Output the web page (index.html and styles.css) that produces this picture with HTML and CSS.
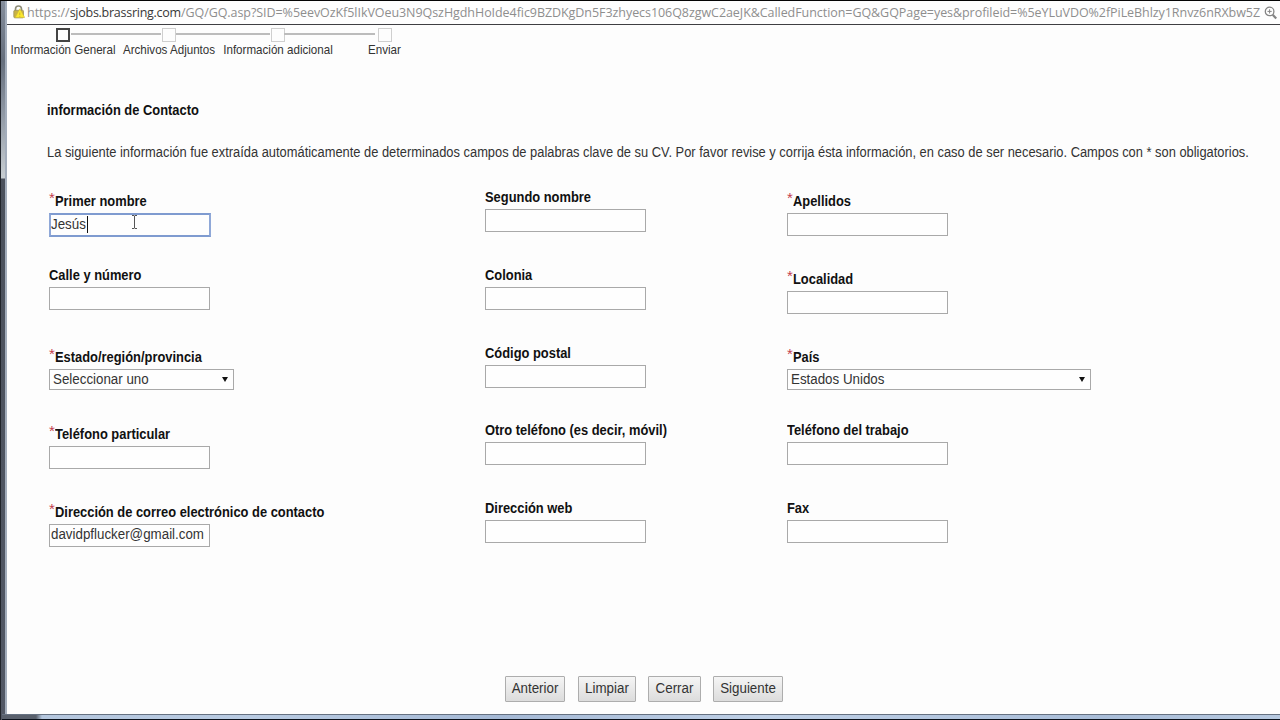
FILE: index.html
```html
<!DOCTYPE html>
<html lang="es">
<head>
<meta charset="utf-8">
<title>Información de Contacto</title>
<link rel="stylesheet" href="styles.css">
</head>
<body>
<div class="window">
  <header class="address">
    <svg class="lock" width="12" height="14" viewBox="0 0 12 14"><path d="M2.5 6V4a3 3 0 0 1 6 0v2" fill="none" stroke="#8d8c78" stroke-width="1.6"/><rect x=".8" y="5.3" width="9.7" height="7.5" rx="1" fill="#c9b343" stroke="#9b9262" stroke-width=".8"/><path d="M6.8 3.8 11.8 12.6H2.2Z" fill="#fae72d" stroke="#c8b53a" stroke-width=".5"/><path d="M6.8 7.5v2.7M6.8 11v.8" stroke="#b89d31" stroke-width=".7"/></svg>
    <div class="url"><span class="scheme">https://</span><span class="host">sjobs.brassring.com</span><span class="path">/GQ/GQ.asp?SID=%5eevOzKf5lIkVOeu3N9QszHgdhHoIde4fic9BZDKgDn5F3zhyecs106Q8zgwC2aeJK&amp;CalledFunction=GQ&amp;GQPage=yes&amp;profileid=%5eYLuVDO%2fPiLeBhlzy1Rnvz6nRXbw5Z</span></div>
    <svg class="zoom" width="14" height="14" viewBox="0 0 14 14" fill="none" stroke="#858585"><circle cx="5.6" cy="5.4" r="4.3" stroke-width="1.3"/><path d="M8.7 8.7 12.2 12.4" stroke-width="2.2"/><path d="M3.5 5.4h4.2M5.6 3.3v4.2" stroke-width="1"/></svg>
  </header>
  <nav class="steps">
    <div class="step s1 current"><i class="box"></i><span>Información General</span></div>
    <div class="step s2"><i class="box"></i><span>Archivos Adjuntos</span></div>
    <div class="step s3"><i class="box"></i><span>Información adicional</span></div>
    <div class="step s4"><i class="box"></i><span>Enviar</span></div>
  </nav>
  <main class="content">
    <h1 class="title">información de Contacto</h1>
    <p class="intro">La siguiente información fue extraída automáticamente de determinados campos de palabras clave de su CV. Por favor revise y corrija ésta información, en caso de ser necesario. Campos con * son obligatorios.</p>
    <form class="form">
      <div class="field req"><label><b class="star">*</b><span>Primer nombre</span></label><div class="input focus"><span class="value">Jesús</span><i class="caret"></i><svg class="beam" width="7" height="14" viewBox="0 0 7 14"><path d="M1 .5h2l.5.5.5-.5h2M3.5 1v12M1 13.5h2l.5-.5.5.5h2" fill="none" stroke="#555"/></svg></div></div>
      <div class="field"><label><span>Segundo nombre</span></label><div class="input"></div></div>
      <div class="field req"><label><b class="star">*</b><span>Apellidos</span></label><div class="input"></div></div>
      <div class="field"><label><span>Calle y número</span></label><div class="input"></div></div>
      <div class="field"><label><span>Colonia</span></label><div class="input"></div></div>
      <div class="field req"><label><b class="star">*</b><span>Localidad</span></label><div class="input"></div></div>
      <div class="field req"><label><b class="star">*</b><span>Estado/región/provincia</span></label><div class="select state"><span class="value">Seleccionar uno</span><i class="arrow"></i></div></div>
      <div class="field"><label><span>Código postal</span></label><div class="input"></div></div>
      <div class="field req"><label><b class="star">*</b><span>País</span></label><div class="select country"><span class="value">Estados Unidos</span><i class="arrow"></i></div></div>
      <div class="field req"><label><b class="star">*</b><span>Teléfono particular</span></label><div class="input"></div></div>
      <div class="field"><label><span>Otro teléfono (es decir, móvil)</span></label><div class="input"></div></div>
      <div class="field"><label><span>Teléfono del trabajo</span></label><div class="input"></div></div>
      <div class="field req"><label><b class="star">*</b><span>Dirección de correo electrónico de contacto</span></label><div class="input"><span class="value">davidpflucker@gmail.com</span></div></div>
      <div class="field"><label><span>Dirección web</span></label><div class="input"></div></div>
      <div class="field"><label><span>Fax</span></label><div class="input"></div></div>
    </form>
    <div class="actions">
      <button class="btn b1" type="button"><span class="value">Anterior</span></button>
      <button class="btn b2" type="button"><span class="value">Limpiar</span></button>
      <button class="btn b3" type="button"><span class="value">Cerrar</span></button>
      <button class="btn b4" type="button"><span class="value">Siguiente</span></button>
    </div>
  </main>
  <footer class="frame-bottom"></footer>
</div>
</body>
</html>
```
FILE: styles.css
```css
* { box-sizing: border-box; }
body { margin: 0; width: 1280px; height: 720px; overflow: hidden; background: #fdfdfd; font-family: "Liberation Sans", Arial, sans-serif; color: #333; }
.window { width: 1280px; height: 720px; padding-left: 7px; display: flex; flex-direction: column; border-top: 1px solid #050505;
  background:
    linear-gradient(90deg, #20242a 0 1px, transparent 1px 2px, transparent 5px, #a3adbb 5px 7px, transparent 7px) 0 0 / 7px 100% no-repeat,
    linear-gradient(180deg, #848d9b 0, #656e7c 60px, #8d96a2 110px, #c8ced2 177px, #4b515c 178px, #525865 100%) 0 0 / 7px 100% no-repeat,
    #fdfdfd; }
.address { height: 24px; display: flex; align-items: center; border-bottom: 1px solid #3f3f43; background: #fefefe; padding-left: 6px; }
.lock { flex: none; margin-right: 2px; margin-top: -1px; }
.url { flex: none; width: 1235px; overflow: hidden; white-space: nowrap; font: 12.5px/20px "Open Sans", "Noto Sans", sans-serif; color: #8e8e8e; }
.host { color: #383838; letter-spacing: -.26px; }
.path { letter-spacing: -.06px; }
.zoom { flex: none; margin-left: 2px; }
.steps { height: 45px; display: flex; }
.step { display: flex; flex-direction: column; align-items: center; padding-top: 3px; font-size: 11.6px; line-height: 14px; position: relative; white-space: nowrap; }
.step span { transform: scaleY(1.06); margin-top: 1px; }
.box { width: 14px; height: 14px; border: 1px solid #cfcfcf; background: #fdfdfd; }
.current .box { border: 2px solid #444; }
.step + .step::before { content: ""; position: absolute; top: 8px; height: 2px; background: #bcbcbc; }
.s1 { width: 112px; }
.s2 { width: 100px; }
.s3 { width: 118px; }
.s4 { width: 95px; }
.step.s2::before { width: 90px; right: 58px; }
.step.s3::before { width: 94px; right: 67px; }
.step.s4::before { width: 91px; right: 57px; }
.content { flex: 1; padding: 33px 0 0 40px; }
.title { margin: 0; font-size: 12.9px; line-height: 16px; color: #111; transform: scaleY(1.08); width: max-content; }
.intro { margin: 26px 0 0; font-size: 12.88px; line-height: 16px; white-space: nowrap; width: max-content; transform: scaleY(1.08); }
.form { display: grid; grid-template-columns: 436px 302px 304px; grid-template-rows: 78px 78px 77px 78px 78px; margin: 29px 0 0 2px; }
.field label { display: flex; height: 19px; font-size: 12.9px; font-weight: bold; line-height: 16px; color: #111; white-space: nowrap; }
.field label span { transform: scaleY(1.08); }
.field.req label { height: 23px; padding-top: 4px; }
.star { width: 6px; font-size: 15px; font-weight: normal; line-height: 16px; margin-top: -4px; color: #c43d4c; }
.value { display: inline-block; transform: scaleY(1.08); }
.input { width: 161px; height: 23px; border: 1px solid #a9a9a9; background: #fefefe; font-size: 13.35px; line-height: 20px; padding-left: 1px; position: relative; }
.focus { height: 24px; width: 162px; border: 2px solid #8ba5d6; border-color: #7f9bd0 #8fa8d8; line-height: 20px; padding-left: 0; }
.caret { position: absolute; left: 36px; top: 1px; width: 1px; height: 17px; background: #111; }
.beam { position: absolute; left: 80px; top: 0; }
.select { height: 21px; border: 1px solid #a9a9a9; background: #fefefe; font-size: 13.35px; line-height: 18px; padding: 0 5px 0 3px; display: flex; justify-content: space-between; align-items: center; }
.state { width: 185px; }
.country { width: 304px; }
.arrow { border: 3px solid transparent; border-top: 5px solid #111; border-bottom: 0; }
.actions { display: flex; margin: 97px 0 0 458px; }
.btn { height: 26px; padding: 0; border: 1px solid #adadad; border-radius: 1px; background: linear-gradient(#f5f5f5, #dcdcdc); font: 13.35px/20px "Liberation Sans", Arial, sans-serif; color: #333; }
.b1 { width: 60px; margin-right: 13px; }
.b2 { width: 58px; margin-right: 12px; }
.b3 { width: 53px; margin-right: 12px; }
.b4 { width: 70px; }
.frame-bottom { height: 6px; margin-left: -5px; border-top: 1px solid #667181; border-bottom: 1px solid #0b111b; background: linear-gradient(90deg, #59606c 34px, #b4c6dd 40px, #b9cbe2 250px, #a5b9d5 500px, #bfd0e6 760px, #a9bdd8 1100px, #b7c9e0); }
```
